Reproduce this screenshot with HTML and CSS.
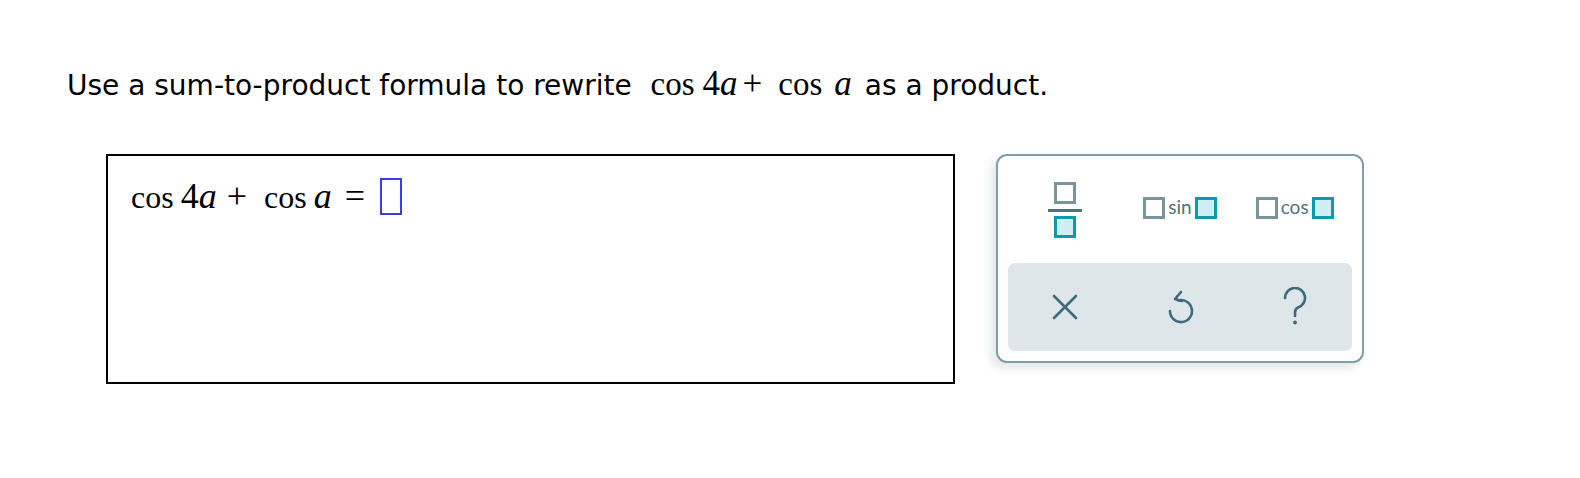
FILE: index.html
```html
<!DOCTYPE html>
<html>
<head>
<meta charset="utf-8">
<link rel="stylesheet" href="styles.css">
</head>
<body>
<main class="page">
  <p class="prompt">Use a sum-to-product formula to rewrite <span class="math"><span class="fn-t">cos</span><span class="num">4</span><i class="big">a</i><span class="plus">+</span><span class="fn-t">cos</span><i class="var big">a</i></span> as a product.</p>
  <div class="work">
    <div class="answer">
      <div class="expr"><span class="fn-t">cos</span><span class="num">4</span><i class="big">a</i><span class="op plus">+</span><span class="fn-t">cos</span><i class="var big">a</i><span class="op eq">=</span><span class="slot"></span></div>
    </div>
    <div class="keypad">
      <div class="keys">
        <button class="key" aria-label="fraction">
          <span class="frac">
            <span class="box empty"></span>
            <span class="bar"></span>
            <span class="box filled"></span>
          </span>
        </button>
        <button class="key" aria-label="sine">
          <span class="fn"><span class="box empty"></span><span class="fn-name">sin</span><span class="box filled"></span></span>
        </button>
        <button class="key" aria-label="cosine">
          <span class="fn"><span class="box empty"></span><span class="fn-name">cos</span><span class="box filled"></span></span>
        </button>
      </div>
      <div class="actions">
        <button class="key" aria-label="clear">
          <svg width="26" height="26" viewBox="0 0 26 26"><path d="M2 2 L24 24 M24 2 L2 24" fill="none" stroke="#3e6b79" stroke-width="2.6" stroke-linecap="round"/></svg>
        </button>
        <button class="key" aria-label="undo">
          <svg width="30" height="36" viewBox="0 0 30 36"><path d="M5 22 A11 11 0 1 0 13 11.5 L17 11.5" fill="none" stroke="#3e6b79" stroke-width="2.6" stroke-linecap="round" stroke-linejoin="round"/><path d="M16 3 L10 10 L17 12" fill="none" stroke="#3e6b79" stroke-width="2.6" stroke-linecap="round" stroke-linejoin="round"/></svg>
        </button>
        <button class="key" aria-label="help">
          <svg width="28" height="40" viewBox="0 0 28 40"><path d="M4 11 A10 10 0 1 1 17 20.5 C15 21.5 14 23 14 25.5 L14 29" fill="none" stroke="#3e6b79" stroke-width="2.6" stroke-linecap="round"/><circle cx="14" cy="35.5" r="1.9" fill="#3e6b79"/></svg>
        </button>
      </div>
    </div>
  </div>
</main>
</body>
</html>
```

FILE: styles.css
```css
html, body {
  margin: 0;
  padding: 0;
  background: #ffffff;
}

.page {
  padding-top: 69px;
}

.prompt {
  margin: 0 0 0 67px;
  font-family: "DejaVu Sans", Verdana, sans-serif;
  font-size: 28px;
  line-height: 34px;
  height: 34px;
  color: #000;
  white-space: nowrap;
}

.math {
  font-family: "Liberation Serif", "Times New Roman", serif;
  font-size: 33px;
  line-height: 20px;
  margin-left: 10px;
  margin-right: 4px;
}
.math .num,
.math .big,
.math .plus {
  font-size: 35px;
}
.math .num {
  margin-left: 8px;
}
.math .plus {
  margin-left: 5px;
  margin-right: 16px;
}
.math .var {
  margin-left: 12px;
}

.work {
  display: flex;
  align-items: flex-start;
  margin-top: 51px;
  margin-left: 106px;
  gap: 41px;
}

.answer {
  box-sizing: border-box;
  width: 849px;
  height: 230px;
  border: 2px solid #000;
  padding: 20px 0 0 23px;
}

.expr {
  font-family: "Liberation Serif", "Times New Roman", serif;
  font-size: 32px;
  line-height: 40px;
  color: #000;
  white-space: nowrap;
}
.expr .num,
.expr .big,
.expr .op {
  font-size: 36px;
}
.expr .num {
  margin-left: 7px;
}
.expr .plus {
  margin-left: 10px;
  margin-right: 17px;
}
.expr .var {
  margin-left: 7px;
}
.expr .eq {
  margin-left: 13px;
  margin-right: 15px;
}
.slot {
  box-sizing: border-box;
  display: inline-block;
  width: 22px;
  height: 37px;
  border: 2px solid #3b3bf0;
  vertical-align: -7px;
}

.keypad {
  box-sizing: border-box;
  width: 368px;
  height: 209px;
  border: 2px solid #7f9ea7;
  border-radius: 11px;
  padding: 0 10px 10px;
  background: #fff;
  box-shadow: -5px 5px 10px rgba(40, 60, 70, 0.13);
  display: flex;
  flex-direction: column;
}

.keys, .actions {
  display: grid;
  grid-template-columns: repeat(3, 1fr);
}
.keys {
  height: 108px;
}
.actions {
  height: 88px;
  background: #dfe6e9;
  border-radius: 7px;
}

.key {
  border: 0;
  background: transparent;
  padding: 0;
  margin: 0;
  display: flex;
  align-items: center;
  justify-content: center;
  font: inherit;
}

.box {
  box-sizing: border-box;
  display: block;
  width: 22px;
  height: 22px;
  border: 3px solid #7a949d;
}
.box.filled {
  border-color: #1198ae;
  background: #cdeef3;
}

.frac {
  display: flex;
  flex-direction: column;
  align-items: center;
}
.frac .bar {
  display: block;
  width: 34px;
  height: 3px;
  background: #4f727d;
  margin: 5px 0 4px;
}

.fn {
  display: flex;
  align-items: center;
  margin-top: -4px;
}
.fn-name {
  font-family: Lato, "Open Sans", sans-serif;
  font-size: 19px;
  color: #4f737e;
  margin: 0 3px 2px 3px;
}
```
